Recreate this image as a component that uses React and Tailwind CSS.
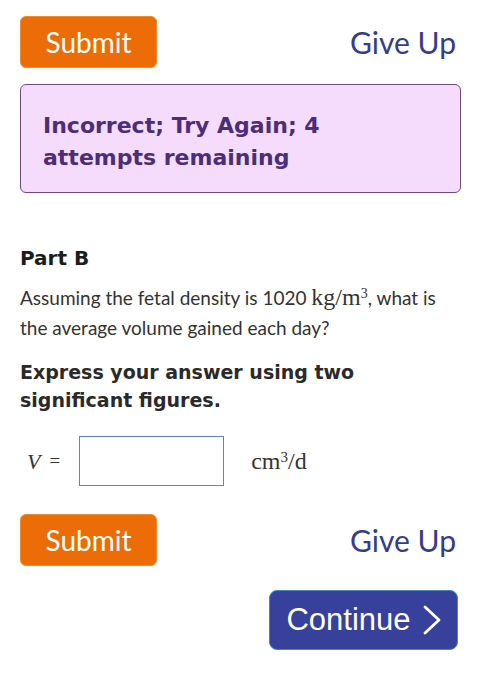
import React from "react";

const gill = { fontFamily: "Lato, 'Open Sans', sans-serif" };
const heavy = { fontFamily: "'DejaVu Sans', Verdana, sans-serif" };
const serif = { fontFamily: "'Liberation Serif', 'DejaVu Serif', serif" };

function ActionRow() {
  return (
    <div className="flex items-center justify-between">
      <button className="w-[137px] h-[52px] rounded-[6px] bg-[#ec6c07] border border-[#f08a2e] text-white text-[28px] leading-none">
        Submit
      </button>
      <button className="mr-[5px] text-[30px] text-[#363c8a] leading-none">Give Up</button>
    </div>
  );
}

export default function App() {
  return (
    <div className="bg-white min-h-[700px] w-[480px] pl-[20px] pr-[19px] pt-[16px]" style={gill}>
      <ActionRow />

      {/* feedback */}
      <div className="mt-[16px] h-[109px] rounded-[6px] border border-[#6e4a8c] bg-[#f5dcfc] px-[22px] pt-[25px]">
        <p className="font-bold text-[22px] leading-[32px] text-[#4b2d78]" style={heavy}>
          Incorrect; Try Again; 4<br />attempts remaining
        </p>
      </div>

      <h2 className="mt-[53px] font-bold text-[20px] leading-[24px] text-[#1c1c1c]" style={heavy}>
        Part B
      </h2>

      <p className="mt-[12px] text-[19px] leading-[30px] text-[#333]">
        Assuming the fetal density is 1020{" "}
        <span className="text-[24px]" style={serif}>
          kg/m<sup className="text-[14px]">3</sup>
        </span>
        , what is
        <br />
        the average volume gained each day?
      </p>

      <p className="mt-[15px] font-bold text-[19px] leading-[28px] text-[#2a2a2a]" style={heavy}>
        Express your answer using two
        <br />
        significant figures.
      </p>

      <div className="mt-[22px] flex items-center" style={serif}>
        <span className="ml-[7px] text-[22px] italic text-[#333]">V</span>
        <span className="ml-[9px] text-[19px] text-[#333]">=</span>
        <input className="ml-[19px] w-[145px] h-[50px] border border-[#5b83d0] bg-white outline-none" />
        <span className="ml-[27px] text-[24px] text-[#333]">
          cm<sup className="text-[15px]">3</sup>/d
        </span>
      </div>

      <div className="mt-[28px]">
        <ActionRow />
      </div>

      <div className="mt-[24px] flex justify-end mr-[3px]">
        <button
          className="w-[189px] h-[60px] rounded-[8px] bg-[#37409a] border border-[#3b8fc0] flex items-center justify-center gap-[12px] text-white text-[31px]"
          style={{ fontFamily: "'Liberation Sans', Arial, sans-serif" }}
        >
          Continue
          <svg width="18" height="30" viewBox="0 0 18 30" fill="none">
            <path d="M2 2 L16 15 L2 28" stroke="white" strokeWidth="2.8" strokeLinecap="round" strokeLinejoin="round" />
          </svg>
        </button>
      </div>
    </div>
  );
}
